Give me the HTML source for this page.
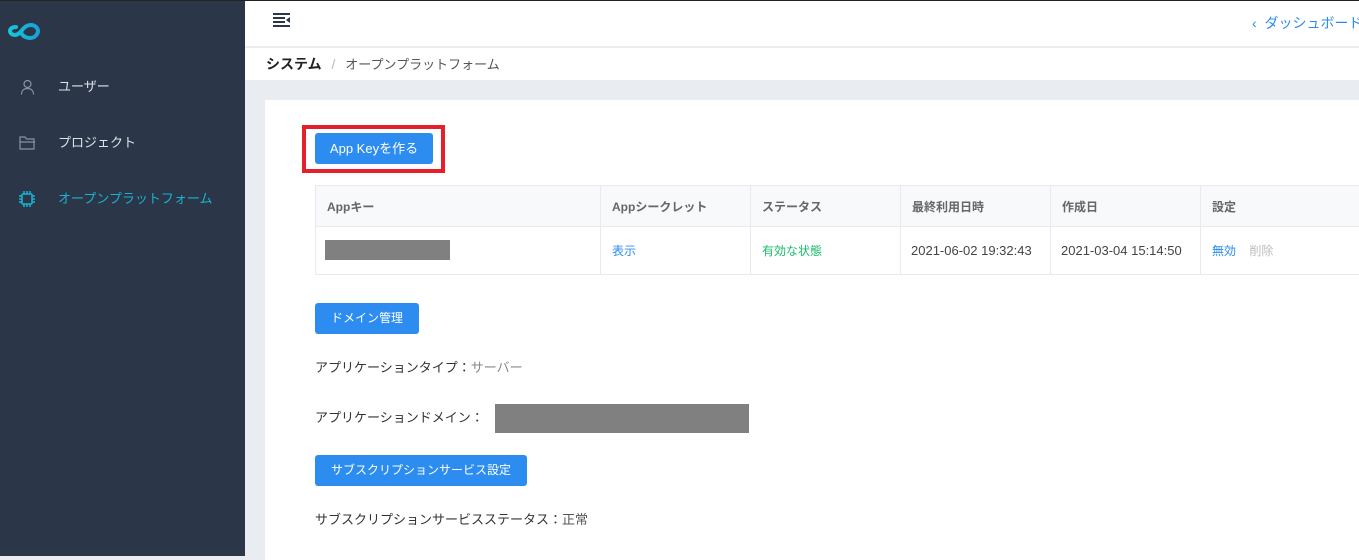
<!DOCTYPE html>
<html><head><meta charset="utf-8"><style>
*{margin:0;padding:0;box-sizing:border-box}
body{width:1359px;height:556px;overflow:hidden;font-family:"Liberation Sans","Noto Sans CJK JP",sans-serif;background:#e9ecf1;position:relative;font-size:13px;color:#333}
.topline{position:absolute;left:0;top:0;width:1359px;height:1px;background:#222;z-index:5}
.side{position:absolute;left:0;top:0;width:245px;height:556px;background:#2b3648}
.nav{position:absolute;left:58px;font-size:13px;color:#dfe3ea;line-height:16px}
.hdr{position:absolute;left:245px;top:0;width:1114px;height:47px;background:#fff;border-bottom:1px solid #eee}
.bc{position:absolute;left:245px;top:48px;width:1114px;height:32px;background:#fff}
.card{position:absolute;left:265px;top:100px;width:1100px;height:460px;background:#fff}
.btn{position:absolute;background:#2d8cf0;color:#fff;border-radius:3px;font-size:12px;text-align:center}
table{position:absolute;left:315px;top:185px;border-collapse:collapse;width:1060px;font-size:12px}
td,th{border:1px solid #e8eaf0;text-align:left;padding-left:11px}
th{background:#f8f9fb;height:41px;color:#666;font-weight:bold}
td{height:48px;color:#444}
td.d{font-size:13px;padding-left:10px}
.lbl{position:absolute;left:315px;font-size:13px;color:#333;line-height:16px}
.gray{position:absolute;background:#808080}
</style></head><body>
<div class="topline"></div>
<div class="side">
<svg style="position:absolute;left:6px;top:20px" width="38" height="22" viewBox="0 0 38 22"><defs><linearGradient id="g" x1="0" x2="1"><stop offset="0" stop-color="#16c6d6"/><stop offset="1" stop-color="#1a9fd8"/></linearGradient></defs><path d="M10 7c-4 0-6 2-6 4s2 4 5 4c4 0 6-4 9-7 2-2 4-3 7-3 4 0 7 3 7 6s-3 7-8 7c-4 0-7-2-8-4" fill="none" stroke="url(#g)" stroke-width="4" stroke-linecap="round"/></svg>
<svg style="position:absolute;left:20px;top:79px" width="15" height="16" viewBox="0 0 15 16" fill="none" stroke="#8a93a3" stroke-width="1.2"><circle cx="7.5" cy="5" r="3.5"/><path d="M1.5 15.5c0-4 2.5-6 6-6s6 2 6 6"/></svg>
<div class="nav" style="top:79px">ユーザー</div>
<svg style="position:absolute;left:19px;top:136px" width="17" height="14" viewBox="0 0 17 14" fill="none" stroke="#8a93a3" stroke-width="1.2"><path d="M1 1h5l1.5 2H15v10H1z M1 6h15"/></svg>
<div class="nav" style="top:135px">プロジェクト</div>
<svg style="position:absolute;left:19px;top:191px" width="16" height="16" viewBox="0 0 16 16" fill="none" stroke="#19b4d2" stroke-width="1.5"><rect x="3" y="3" width="10" height="10" rx="1"/><path d="M5 0v3M8 0v3M11 0v3M5 13v3M8 13v3M11 13v3M0 5h3M0 8h3M0 11h3M13 5h3M13 8h3M13 11h3"/></svg>
<div class="nav" style="top:191px;color:#19b4d2">オープンプラットフォーム</div>
</div>
<div class="hdr">
<svg style="position:absolute;left:28px;top:13px" width="18" height="14" viewBox="0 0 18 14" fill="#2b3648"><rect y="0" width="17" height="2"/><rect y="4" width="12" height="2"/><rect y="8" width="12" height="2"/><rect y="12" width="17" height="2"/><path d="M17 4v6l-4-3z"/></svg>
<div style="position:absolute;left:1007px;top:13px;color:#2d8cf0;font-size:14px;white-space:nowrap">‹&nbsp; ダッシュボード</div>
</div>
<div class="bc"><div style="position:absolute;left:21px;top:6px;font-size:14px;white-space:nowrap"><b style="color:#222">システム</b> <span style="color:#bbb;margin:0 6px">/</span> <span style="color:#555;font-size:13px">オープンプラットフォーム</span></div></div>
<div class="card"></div>
<div style="position:absolute;left:302px;top:125px;width:143px;height:48px;border:4px solid #e5202a"></div>
<div class="btn" style="left:315px;top:133px;width:118px;height:31px;line-height:31px;font-size:13px">App Keyを作る</div>
<table>
<tr><th style="width:285px">Appキー</th><th style="width:150px">Appシークレット</th><th style="width:150px">ステータス</th><th style="width:150px">最終利用日時</th><th style="width:150px">作成日</th><th>設定</th></tr>
<tr><td></td><td style="color:#2d8cf0">表示</td><td style="color:#19be6b">有効な状態</td><td class="d">2021-06-02 19:32:43</td><td class="d">2021-03-04 15:14:50</td><td><span style="color:#2d8cf0">無効</span>&nbsp;&nbsp;&nbsp; <span style="color:#bbb">削除</span></td></tr>
</table>
<div class="gray" style="left:325px;top:240px;width:125px;height:20px"></div>
<div class="btn" style="left:315px;top:303px;width:104px;height:31px;line-height:31px">ドメイン管理</div>
<div class="lbl" style="top:360px">アプリケーションタイプ：<span style="color:#888">サーバー</span></div>
<div class="lbl" style="top:410px">アプリケーションドメイン：</div>
<div class="gray" style="left:495px;top:404px;width:254px;height:29px"></div>
<div class="btn" style="left:315px;top:455px;width:212px;height:31px;line-height:31px">サブスクリプションサービス設定</div>
<div class="lbl" style="top:512px">サブスクリプションサービスステータス：<span style="color:#555">正常</span></div>
</body></html>
